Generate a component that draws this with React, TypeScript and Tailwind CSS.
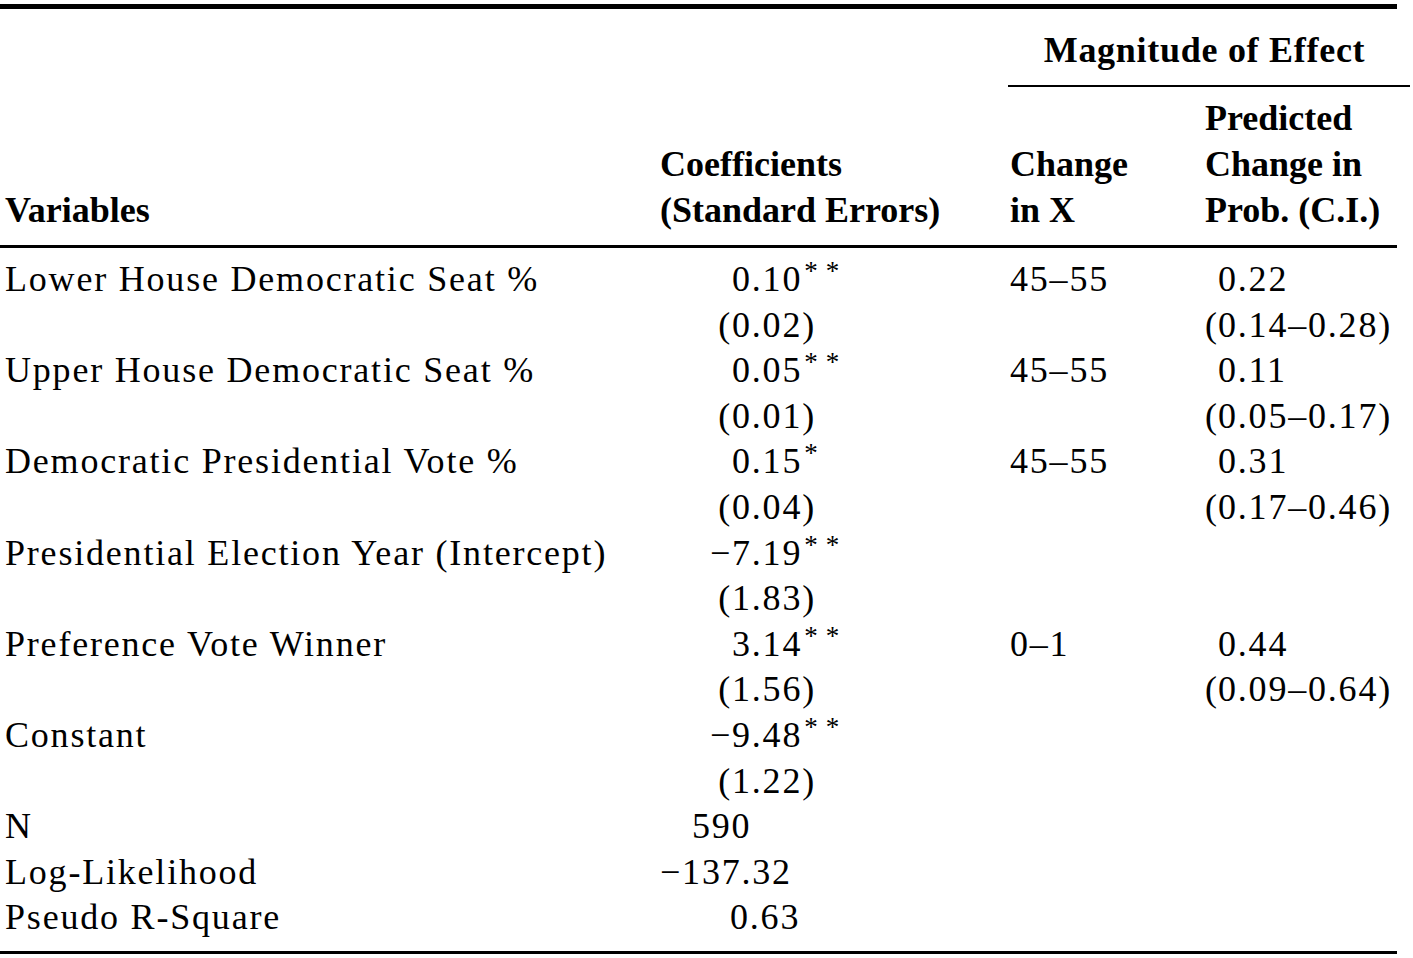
import React from "react";

type Row = {
  name: string;
  coef: [string, string];
  se: [string, string];
  change?: string;
  prob?: [string, string];
  ci?: [string, string];
};

// 本体の行（係数・標準誤差・効果量）
const rows: Row[] = [
  {
    name: "Lower House Democratic Seat %",
    coef: ["", "0.10**"],
    se: ["(", "0.02)"],
    change: "45–55",
    prob: ["", "0.22"],
    ci: ["(", "0.14–0.28)"],
  },
  {
    name: "Upper House Democratic Seat %",
    coef: ["", "0.05**"],
    se: ["(", "0.01)"],
    change: "45–55",
    prob: ["", "0.11"],
    ci: ["(", "0.05–0.17)"],
  },
  {
    name: "Democratic Presidential Vote %",
    coef: ["", "0.15*"],
    se: ["(", "0.04)"],
    change: "45–55",
    prob: ["", "0.31"],
    ci: ["(", "0.17–0.46)"],
  },
  {
    name: "Presidential Election Year (Intercept)",
    coef: ["−", "7.19**"],
    se: ["(", "1.83)"],
  },
  {
    name: "Preference Vote Winner",
    coef: ["", "3.14**"],
    se: ["(", "1.56)"],
    change: "0–1",
    prob: ["", "0.44"],
    ci: ["(", "0.09–0.64)"],
  },
  {
    name: "Constant",
    coef: ["−", "9.48**"],
    se: ["(", "1.22)"],
  },
];

function Num({ value, wide }: { value: [string, string]; wide?: boolean }) {
  const [pre, rest] = value;
  const m = rest.match(/^([^*]*)(\**)$/);
  const body = m ? m[1] : rest;
  const stars = m ? m[2] : "";
  return (
    <div className="h-[45.6px] whitespace-nowrap">
      <span
        className={
          wide
            ? "inline-block w-[72px] text-right"
            : "inline-block w-[13px] text-right"
        }
      >
        {pre}
      </span>
      {body}
      {stars && (
        <span className="relative -top-[11px] ml-[2px] text-[27px] leading-[0] tracking-[0.3em]">
          {stars}
        </span>
      )}
    </div>
  );
}

function Rule({ className }: { className: string }) {
  return <div className={`w-[1397px] bg-black ${className}`} />;
}

export default function App() {
  return (
    <div
      className="w-[1413px] h-[958px] bg-white text-black"
      style={{ fontFamily: '"Liberation Serif", "Times New Roman", serif' }}
    >
      <div className="pt-[4px]">
        <Rule className="h-[5px]" />
      </div>

      {/* ヘッダー */}
      <div className="grid grid-cols-[660px_350px_195px_1fr] text-[36px] font-bold leading-[46px]">
        <div className="col-start-3 col-span-2 pt-[18px]">
          <div className="text-center pr-[14px] tracking-[0.02em]">Magnitude of Effect</div>
          <div className="-ml-[2px] mr-[3px] mt-[12px] h-[2px] bg-black" />
        </div>

        <div className="col-start-1 row-start-2 mt-[8px] flex flex-col justify-end pl-[5px]">
          <div>Variables</div>
        </div>
        <div className="col-start-2 row-start-2 mt-[8px] flex flex-col justify-end">
          <div>Coefficients</div>
          <div>(Standard Errors)</div>
        </div>
        <div className="col-start-3 row-start-2 mt-[8px] flex flex-col justify-end">
          <div>Change</div>
          <div>in X</div>
        </div>
        <div className="col-start-4 row-start-2 mt-[8px] flex flex-col justify-end">
          <div>Predicted</div>
          <div>Change in</div>
          <div>Prob. (C.I.)</div>
        </div>
      </div>

      <div className="mt-[12px]">
        <Rule className="h-[3px]" />
      </div>

      {/* 本体 */}
      <div className="pt-[9px] text-[36px] leading-[45.6px] tracking-[0.05em]">
        {rows.map((r) => (
          <div
            key={r.name}
            className="grid grid-cols-[660px_350px_195px_1fr]"
          >
            <div className="pl-[5px] whitespace-nowrap">{r.name}</div>
            <div>
              <Num value={r.coef} wide />
              <Num value={r.se} wide />
            </div>
            <div>{r.change}</div>
            <div>
              {r.prob && <Num value={r.prob} />}
              {r.ci && <Num value={r.ci} />}
            </div>
          </div>
        ))}

        <div className="grid grid-cols-[660px_350px_195px_1fr]">
          <div className="pl-[5px]">N</div>
          <div className="pl-[32px]">590</div>
        </div>
        <div className="grid grid-cols-[660px_350px_195px_1fr]">
          <div className="pl-[5px]">Log-Likelihood</div>
          <div>−137.32</div>
        </div>
        <div className="grid grid-cols-[660px_350px_195px_1fr]">
          <div className="pl-[5px]">Pseudo R-Square</div>
          <div className="pl-[70px]">0.63</div>
        </div>
      </div>

      <div className="mt-[10px]">
        <Rule className="h-[3px]" />
      </div>
    </div>
  );
}
